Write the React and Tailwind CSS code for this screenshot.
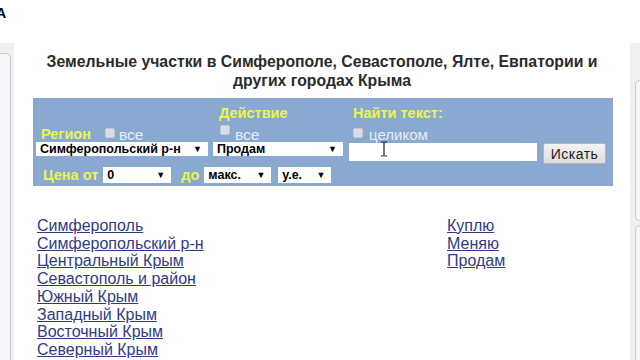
import React from 'react';

const regions = [
  'Симферополь',
  'Симферопольский р-н',
  'Центральный Крым',
  'Севастополь и район',
  'Южный Крым',
  'Западный Крым',
  'Восточный Крым',
  'Северный Крым',
];

const actions = ['Куплю', 'Меняю', 'Продам'];

function FakeSelect({ value, className }) {
  return (
    <div className={`bg-white flex items-center justify-between pl-[4px] pr-[6px] text-[12.5px] font-bold text-black leading-none ${className}`}>
      <span>{value}</span>
      <span className="text-[9px]">▼</span>
    </div>
  );
}

function Check() {
  return <span className="block w-[10px] h-[10px] bg-[#d9dee6] border border-[#c4cad3] rounded-[2px]" />;
}

export default function App() {
  return (
    <div className="w-[640px] h-[360px] bg-white overflow-hidden flex flex-col font-['Liberation_Sans',Arial,sans-serif]">
      <div className="h-[43px] shrink-0 pt-[6px]">
        <span className="block -ml-[4px] text-[14px] font-bold text-black leading-none">A</span>
      </div>

      <div className="flex flex-1 min-h-0">
        {/* left strip */}
        <div className="w-[14px] shrink-0 bg-[#eef0f2] pt-[10px]">
          <div className="h-full w-[11px] border-r border-t border-[#c9cbce] rounded-tr-[5px] bg-[#f5f6f7]" />
        </div>

        {/* main */}
        <div className="flex-1 flex flex-col">
          <h1 className="text-center text-[15.8px] font-bold text-[#2b2b2b] leading-[19px] pt-[9px] px-[10px] whitespace-nowrap">
            Земельные участки в Симферополе, Севастополе, Ялте, Евпатории и<br />других городах Крыма
          </h1>

          <div className="ml-[19px] w-[580px] h-[88px] mt-[8px] bg-[#8aa9d0] pl-[3px] pt-[7px]">
            <div className="grid grid-cols-[172px_129px_188px_63px] grid-rows-[16px_21px_auto] gap-x-[6px]">
              <div />
              <div className="pl-[5px] text-[14.5px] font-bold text-[#e9f64c] leading-[16px]">Действие</div>
              <div className="pl-[4px] text-[14.5px] font-bold text-[#e9f64c] leading-[16px]">Найти текст:</div>
              <div />

              <div className="flex items-end pl-[5px]">
                <span className="text-[14.5px] font-bold text-[#e9f64c] leading-[15px]">Регион</span>
                <span className="ml-[14px] mb-[4px]"><Check /></span>
                <span className="ml-[4px] text-[15.5px] text-[#e8eef7] leading-[15px]">все</span>
              </div>
              <div className="flex items-end pl-[6px]">
                <span className="mb-[7px]"><Check /></span>
                <span className="ml-[5px] text-[15.5px] text-[#e8eef7] leading-[15px]">все</span>
              </div>
              <div className="flex items-end pl-[4px]">
                <span className="mb-[4px]"><Check /></span>
                <span className="ml-[6px] text-[15px] text-[#e8eef7] leading-[15px]">целиком</span>
              </div>
              <div />

              <FakeSelect value="Симферопольский р-н" className="h-[14px]" />
              <FakeSelect value="Продам" className="h-[14px] -ml-[1px]" />
              <div className="relative bg-white h-[18px] mt-[1px]">
                <svg className="absolute left-[31px] top-[-2px]" width="8" height="16" viewBox="0 0 8 16">
                  <path d="M1 1h2.5M4.5 1H7M4 1v14M1 15h2.5M4.5 15H7" stroke="#222" strokeWidth="1.2" fill="none" />
                </svg>
              </div>
              <button className="h-[21px] mt-[1px] bg-gradient-to-b from-[#f4f4f4] to-[#dcdcdc] border border-[#b5b5b5] rounded-[2px] text-[14px] text-[#222] leading-none tracking-[0.5px]">
                Искать
              </button>
            </div>

            <div className="flex items-center mt-[3px] h-[16px]">
              <span className="ml-[7px] text-[14.5px] font-bold text-[#e9f64c] leading-none">Цена от</span>
              <FakeSelect value="0" className="ml-[5px] w-[68px] h-[16px]" />
              <span className="ml-[10px] text-[14.5px] font-bold text-[#e9f64c] leading-none">до</span>
              <FakeSelect value="макс." className="ml-[5px] w-[67px] h-[16px]" />
              <FakeSelect value="у.е." className="ml-[7px] w-[53px] h-[16px]" />
            </div>
          </div>

          <div className="flex mt-[31px] ml-[23px] text-[16px] leading-[17.7px] text-[#2f3b88]">
            <div className="w-[410px] flex flex-col items-start">
              {regions.map((r) => (
                <a key={r} href="#" className="underline">{r}</a>
              ))}
            </div>
            <div className="flex flex-col items-start">
              {actions.map((a) => (
                <a key={a} href="#" className="underline">{a}</a>
              ))}
            </div>
          </div>
        </div>

        {/* right strip */}
        <div className="w-[10px] shrink-0 bg-[#eef0f2] flex flex-col">
          <div className="mt-[37px] ml-[5px] h-[141px] border-l border-t border-b border-[#c9cbce] rounded-l-[5px] bg-[#f5f6f7]" />
          <div className="mt-[4px] ml-[5px] flex-1 border-l border-t border-[#c9cbce] rounded-tl-[5px] bg-[#f5f6f7]" />
        </div>
      </div>
    </div>
  );
}
